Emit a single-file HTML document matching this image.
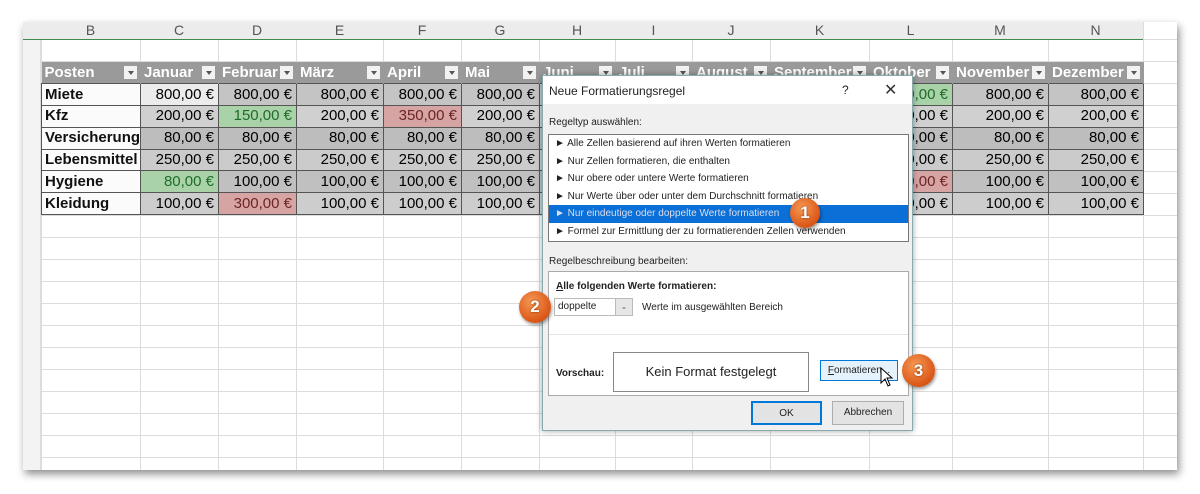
<!DOCTYPE html>
<html><head><meta charset="utf-8"><style>
*{margin:0;padding:0;box-sizing:border-box}
body{width:1200px;height:494px;background:#fff;position:relative;overflow:hidden;font-family:"Liberation Sans",sans-serif}
.sheet{position:absolute;left:23px;top:22px;width:1154px;height:448px;background:#fff;box-shadow:2px 4px 8px rgba(0,0,0,.45);overflow:hidden;
background-image:linear-gradient(#dcdcdc 1px,transparent 1px);background-size:100% 22px;background-position:0 17px}
.vl{position:absolute;top:0;bottom:0;width:1px;background:#dcdcdc}
.colhdr{position:absolute;left:0;top:0;width:1120px;height:18px;background:#ececec;border-bottom:1px solid #3f8a4c;font-size:14px;color:#555}
.colhdr span{position:absolute;top:0;text-align:center}
.rowhdr{position:absolute;left:0;top:0;width:18px;height:448px;background:#f3f3f3;border-right:1px solid #ddd}
table{position:absolute;left:41px;top:62px;width:1102px;border-collapse:collapse;table-layout:fixed;font-size:15px}
td{height:21.8px;border:1px solid #555;text-align:right;padding-right:4px;white-space:nowrap;overflow:hidden;line-height:20px}
tr.h td{background:#9a9a9a;color:#fff;font-weight:bold;text-align:left;padding-left:3px;border:none;border-right:1px solid #9a9a9a;position:relative}
tr.h td i{position:absolute;right:3px;top:4px;width:13px;height:13px;background:#f2f2f2;font-style:normal}
tr.h td i:after{content:"";position:absolute;left:4px;top:5px;border:3px solid transparent;border-top:4px solid #555}
td.n{text-align:left;font-weight:bold;padding-left:3px;background:#fbfbfb;color:#111}
tr.r1 td{background:#c4c4c4}tr.r2 td{background:#d0d0d0}tr.r3 td{background:#bdbdbd}tr.r4 td{background:#cbcbcb}tr.r5 td{background:#c0c0c0}tr.r6 td{background:#cdcdcd}
tr td.n{background:#fbfbfb}
tr td.g{background:#a9d2a9;color:#1f6b2a}tr td.rd{background:#d7a4a4;color:#6d2424}
tr td.lt{background:#ececec}
.dlg{position:absolute;left:542px;top:75px;width:371px;height:356px;background:#f0f0f0;border:1px solid #8aa;box-shadow:0 0 6px rgba(0,0,0,.35);font-size:10px;color:#222}
.tb{position:absolute;left:0;top:0;width:100%;height:28px;background:#fff;font-size:12px}
.lst{position:absolute;left:5px;top:58px;width:361px;height:108px;background:#fff;border:1px solid #777}
.lst div{height:17.5px;line-height:17.5px;padding-left:6px;white-space:nowrap}
.lst .sel{background:#0a6fd6;color:#dde}
.box{position:absolute;left:5px;top:195px;width:361px;height:125px;background:#fff;border:1px solid #aaa}
.btn{position:absolute;background:#e3e3e3;border:1px solid #adadad;text-align:center;font-size:10px}
.c{position:absolute;border-radius:50%;background:radial-gradient(circle at 40% 35%,#f59a55,#dd5a1a 65%,#b8420e);color:#fff;font-weight:bold;font-size:17px;text-align:center;box-shadow:1px 2px 3px rgba(0,0,0,.4);text-shadow:0 0 2px #7a2c00}
</style></head><body>
<div class="sheet">
<div class="rowhdr"></div>
<div class="vl" style="left:18px"></div><div class="vl" style="left:117px"></div><div class="vl" style="left:195px"></div><div class="vl" style="left:273px"></div><div class="vl" style="left:360px"></div><div class="vl" style="left:438px"></div><div class="vl" style="left:516px"></div><div class="vl" style="left:592px"></div><div class="vl" style="left:669px"></div><div class="vl" style="left:747px"></div><div class="vl" style="left:846px"></div><div class="vl" style="left:929px"></div><div class="vl" style="left:1025px"></div><div class="vl" style="left:1120px"></div>
<div class="colhdr">
<span style="left:18px;width:99px">B</span><span style="left:117px;width:78px">C</span><span style="left:195px;width:78px">D</span><span style="left:273px;width:87px">E</span><span style="left:360px;width:78px">F</span><span style="left:438px;width:78px">G</span><span style="left:516px;width:76px">H</span><span style="left:592px;width:77px">I</span><span style="left:669px;width:78px">J</span><span style="left:747px;width:99px">K</span><span style="left:846px;width:83px">L</span><span style="left:929px;width:96px">M</span><span style="left:1025px;width:95px">N</span>
</div>
</div>
<table>
<colgroup><col style="width:99px"><col style="width:78px"><col style="width:78px"><col style="width:87px"><col style="width:78px"><col style="width:78px"><col style="width:76px"><col style="width:77px"><col style="width:78px"><col style="width:99px"><col style="width:83px"><col style="width:96px"><col style="width:95px"></colgroup>
<tr class="h"><td>Posten<i></i></td><td>Januar<i></i></td><td>Februar<i></i></td><td>März<i></i></td><td>April<i></i></td><td>Mai<i></i></td><td>Juni<i></i></td><td>Juli<i></i></td><td>August<i></i></td><td>September<i></i></td><td>Oktober<i></i></td><td>November<i></i></td><td>Dezember<i></i></td></tr>
<tr class="r1"><td class="n">Miete</td><td class="lt">800,00 €</td><td>800,00 €</td><td>800,00 €</td><td>800,00 €</td><td>800,00 €</td><td>800,00 €</td><td>800,00 €</td><td>800,00 €</td><td>800,00 €</td><td class="g">600,00 €</td><td>800,00 €</td><td>800,00 €</td></tr>
<tr class="r2"><td class="n">Kfz</td><td>200,00 €</td><td class="g">150,00 €</td><td>200,00 €</td><td class="rd">350,00 €</td><td>200,00 €</td><td>200,00 €</td><td>200,00 €</td><td>200,00 €</td><td>200,00 €</td><td>200,00 €</td><td>200,00 €</td><td>200,00 €</td></tr>
<tr class="r3"><td class="n">Versicherung</td><td>80,00 €</td><td>80,00 €</td><td>80,00 €</td><td>80,00 €</td><td>80,00 €</td><td>80,00 €</td><td>80,00 €</td><td>80,00 €</td><td>80,00 €</td><td>100,00 €</td><td>80,00 €</td><td>80,00 €</td></tr>
<tr class="r4"><td class="n">Lebensmittel</td><td>250,00 €</td><td>250,00 €</td><td>250,00 €</td><td>250,00 €</td><td>250,00 €</td><td>250,00 €</td><td>250,00 €</td><td>250,00 €</td><td>250,00 €</td><td>250,00 €</td><td>250,00 €</td><td>250,00 €</td></tr>
<tr class="r5"><td class="n">Hygiene</td><td class="g">80,00 €</td><td>100,00 €</td><td>100,00 €</td><td>100,00 €</td><td>100,00 €</td><td>100,00 €</td><td>100,00 €</td><td>100,00 €</td><td>100,00 €</td><td class="rd">200,00 €</td><td>100,00 €</td><td>100,00 €</td></tr>
<tr class="r6"><td class="n">Kleidung</td><td>100,00 €</td><td class="rd">300,00 €</td><td>100,00 €</td><td>100,00 €</td><td>100,00 €</td><td>100,00 €</td><td>100,00 €</td><td>100,00 €</td><td>100,00 €</td><td>100,00 €</td><td>100,00 €</td><td>100,00 €</td></tr>
</table>

<div class="dlg">
<div class="tb"><span style="position:absolute;left:6px;top:8px">Neue Formatierungsregel</span><span style="position:absolute;left:299px;top:7px">?</span><span style="position:absolute;left:341px;top:4px;font-size:16px;color:#333">✕</span></div>
<div style="position:absolute;left:6px;top:41px">Regeltyp auswählen:</div>
<div class="lst">
<div>► Alle Zellen basierend auf ihren Werten formatieren</div>
<div>► Nur Zellen formatieren, die enthalten</div>
<div>► Nur obere oder untere Werte formatieren</div>
<div>► Nur Werte über oder unter dem Durchschnitt formatieren</div>
<div class="sel">► Nur eindeutige oder doppelte Werte formatieren</div>
<div>► Formel zur Ermittlung der zu formatierenden Zellen verwenden</div>
</div>
<div style="position:absolute;left:6px;top:180px">Regelbeschreibung bearbeiten:</div>
<div class="box">
<div style="position:absolute;left:7px;top:9px;font-weight:bold"><u>A</u>lle folgenden Werte formatieren:</div>
<div style="position:absolute;left:5px;top:26px;width:79px;height:18px;border:1px solid #bbb;background:#fff;padding:2px 3px">doppelte<span style="position:absolute;right:0;top:0;width:17px;height:16px;background:#e6e6e6;border-left:1px solid #bbb;text-align:center;font-size:8px;line-height:16px;color:#666">⌄</span></div>
<div style="position:absolute;left:93px;top:30px">Werte im ausgewählten Bereich</div>
<div style="position:absolute;left:0;right:0;top:62px;border-top:1px solid #e4e4e4"></div>
<div style="position:absolute;left:7px;top:96px;font-weight:bold">Vorschau:</div>
<div style="position:absolute;left:64px;top:80px;width:196px;height:40px;border:1px solid #888;font-size:13px;text-align:center;line-height:38px">Kein Format festgelegt</div>
<div class="btn" style="left:271px;top:88px;width:78px;height:21px;line-height:19px;background:#e5f1fb;border-color:#0078d7"><u>F</u>ormatieren...</div>
</div>
<div class="btn" style="left:208px;top:325px;width:71px;height:24px;line-height:22px;border:2px solid #0078d7">OK</div>
<div class="btn" style="left:289px;top:325px;width:72px;height:24px;line-height:22px">Abbrechen</div>
</div>
<svg style="position:absolute;left:880px;top:367px" width="14" height="22" viewBox="0 0 14 22"><path d="M1 1 L1 16 L5 12 L8 19 L10 18 L7 11 L12 11 Z" fill="#fff" stroke="#000" stroke-width="1"/></svg>
<div class="c" style="left:790px;top:198px;width:30px;height:30px;line-height:30px">1</div>
<div class="c" style="left:519px;top:291px;width:32px;height:32px;line-height:32px">2</div>
<div class="c" style="left:902px;top:354px;width:33px;height:33px;line-height:33px">3</div>
</body></html>
